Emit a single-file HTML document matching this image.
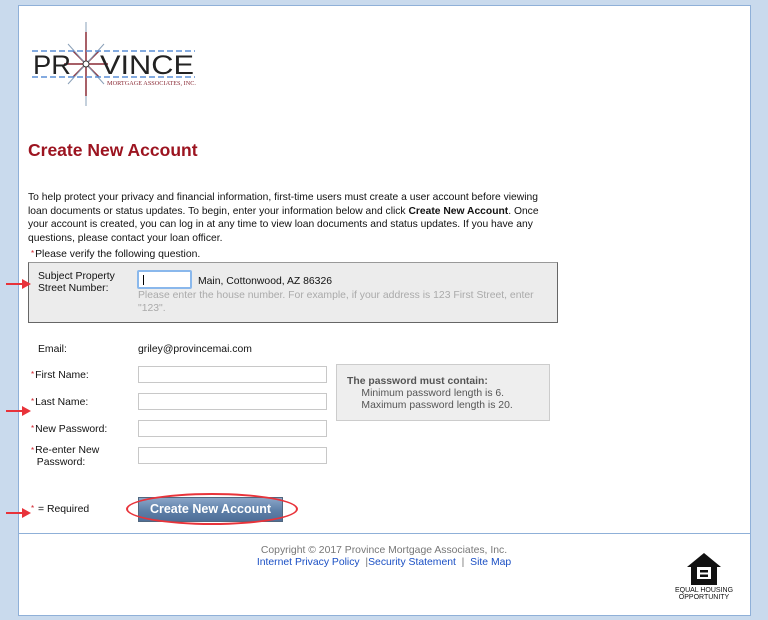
<!DOCTYPE html>
<html><head><meta charset="utf-8"><style>
*{margin:0;padding:0;box-sizing:border-box}
body{width:768px;height:620px;background:#c9daed;font-family:"Liberation Sans",Arial,sans-serif;font-size:10.4px;color:#111;position:relative;overflow:hidden}
.panel{position:absolute;left:18px;top:5px;width:733px;height:611px;background:#fff;border:1px solid #8fb0d8}
.a{position:absolute;white-space:nowrap}
.req{color:#d0202a;font-size:8px;vertical-align:top;margin-right:1px}
.inp{position:absolute;background:#fff;border:1px solid #c8c8c8;height:17px;width:189px;left:138px}
</style></head><body>
<div class="panel"></div>
<svg class="a" style="left:28px;top:18px" width="170" height="92" viewBox="0 0 170 92">
<line x1="58" y1="4" x2="58" y2="88" stroke="#8aa0b8" stroke-width="1"/>
<g stroke="#8a2a35" stroke-width="1.5"><line x1="58" y1="14" x2="58" y2="78"/><line x1="36" y1="46" x2="80" y2="46"/><line x1="45" y1="33" x2="71" y2="59"/><line x1="71" y1="33" x2="45" y2="59"/></g>
<g stroke="#8aa0b8" stroke-width="1"><line x1="40" y1="26" x2="76" y2="66"/><line x1="76" y1="26" x2="40" y2="66"/></g>
<circle cx="58" cy="46" r="3" fill="#fff" stroke="#333"/>
<line x1="4" y1="33" x2="167" y2="33" stroke="#5b8fd6" stroke-width="1.5" stroke-dasharray="6,3"/>
<line x1="4" y1="59" x2="167" y2="59" stroke="#5b8fd6" stroke-width="1.5" stroke-dasharray="6,3"/>
<text x="5" y="56" font-family="Liberation Sans" font-size="27" fill="#222" textLength="38" lengthAdjust="spacingAndGlyphs">PR</text>
<text x="72" y="56" font-family="Liberation Sans" font-size="27" fill="#222" textLength="94" lengthAdjust="spacingAndGlyphs">VINCE</text>
<text x="79" y="67" font-family="Liberation Serif" font-size="6.5" fill="#8a2a35" textLength="89" lengthAdjust="spacingAndGlyphs">MORTGAGE ASSOCIATES, INC.</text>
</svg>
<div class="a" style="left:28px;top:140px;font-size:17.5px;font-weight:bold;color:#9c1420">Create New Account</div>
<div class="a" style="left:28px;top:191px;line-height:13.5px;font-size:10.3px">To help protect your privacy and financial information, first-time users must create a user account before viewing<br>loan documents or status updates. To begin, enter your information below and click <b>Create New Account</b>. Once<br>your account is created, you can log in at any time to view loan documents and status updates. If you have any<br>questions, please contact your loan officer.</div>
<div class="a" style="left:31px;top:249px"><span class="req">*</span>Please verify the following question.</div>
<div class="a" style="left:28px;top:262px;width:530px;height:61px;background:#ececec;border:1px solid #666;border-top-color:#999"></div>
<div class="a" style="left:38px;top:271px;line-height:12px">Subject Property<br>Street Number:</div>
<div class="a" style="left:137px;top:270px;width:55px;height:19px;background:#fff;border:2px solid #8ab8ec;border-radius:2px"><div style="position:absolute;left:4px;top:3px;width:1px;height:10px;background:#000"></div></div>
<div class="a" style="left:198px;top:276px">Main, Cottonwood, AZ 86326</div>
<div class="a" style="left:138px;top:290px;color:#aaa;line-height:12.5px">Please enter the house number. For example, if your address is 123 First Street, enter<br>"123".</div>
<div class="a" style="left:38px;top:344px">Email:</div>
<div class="a" style="left:138px;top:344px">griley@provincemai.com</div>
<div class="a" style="left:31px;top:370px"><span class="req">*</span>First Name:</div>
<div class="a" style="left:31px;top:397px"><span class="req">*</span>Last Name:</div>
<div class="a" style="left:31px;top:424px"><span class="req">*</span>New Password:</div>
<div class="a" style="left:31px;top:445px;line-height:12px"><span class="req">*</span>Re-enter New<br>&nbsp;&nbsp;Password:</div>
<div class="inp" style="top:366px"></div>
<div class="inp" style="top:393px"></div>
<div class="inp" style="top:420px"></div>
<div class="inp" style="top:447px"></div>
<div class="a" style="left:336px;top:364px;width:214px;height:57px;background:#eeeeee;border:1px solid #ccc;color:#555;line-height:12px;padding:11px 0 0 10px"><b>The password must contain:</b><br>&nbsp;&nbsp;&nbsp;&nbsp;&nbsp;Minimum password length is 6.<br>&nbsp;&nbsp;&nbsp;&nbsp;&nbsp;Maximum password length is 20.</div>
<div class="a" style="left:31px;top:504px"><span class="req">*</span> = Required</div>
<div class="a" style="left:138px;top:497px;width:145px;height:25px;background:linear-gradient(#8aa6c8,#5d7fa8 55%,#4f6f98);border:1px solid #51677f;color:#fff;font-weight:bold;font-size:12.5px;text-align:center;line-height:23px">Create New Account</div>
<div class="a" style="left:126px;top:493px;width:172px;height:32px;border:2px solid #e8333a;border-radius:50%"></div>
<svg class="a" style="left:0;top:0" width="40" height="620">
<g stroke="#e8333a" stroke-width="2"><line x1="6" y1="284" x2="25" y2="284"/><line x1="6" y1="411" x2="25" y2="411"/><line x1="6" y1="513" x2="25" y2="513"/></g>
<g fill="#e8333a"><path d="M22 279l9 5-9 5z"/><path d="M22 406l9 5-9 5z"/><path d="M22 508l9 5-9 5z"/></g>
</svg>
<div class="a" style="left:19px;top:533px;width:731px;height:1px;background:#8fb0d8"></div>
<div class="a" style="left:0;top:545px;width:768px;text-align:center;color:#777">Copyright © 2017 Province Mortgage Associates, Inc.</div>
<div class="a" style="left:0;top:557px;width:768px;text-align:center;color:#1a4fc4">Internet Privacy Policy <span style="color:#777">&nbsp;|</span>Security Statement <span style="color:#777">&nbsp;|&nbsp;</span> Site Map</div>
<svg class="a" style="left:686px;top:552px" width="36" height="34" viewBox="0 0 36 34"><path d="M18 1L1 15h4v18h26V15h4z" fill="#111"/><rect x="11" y="15" width="14" height="12" fill="#fff"/><rect x="14" y="18" width="8" height="2.5" fill="#111"/><rect x="14" y="22.5" width="8" height="2.5" fill="#111"/></svg>
<div class="a" style="left:670px;top:587px;width:68px;text-align:center;font-size:7px;line-height:7px;color:#111">EQUAL HOUSING<br>OPPORTUNITY</div>
</body></html>
